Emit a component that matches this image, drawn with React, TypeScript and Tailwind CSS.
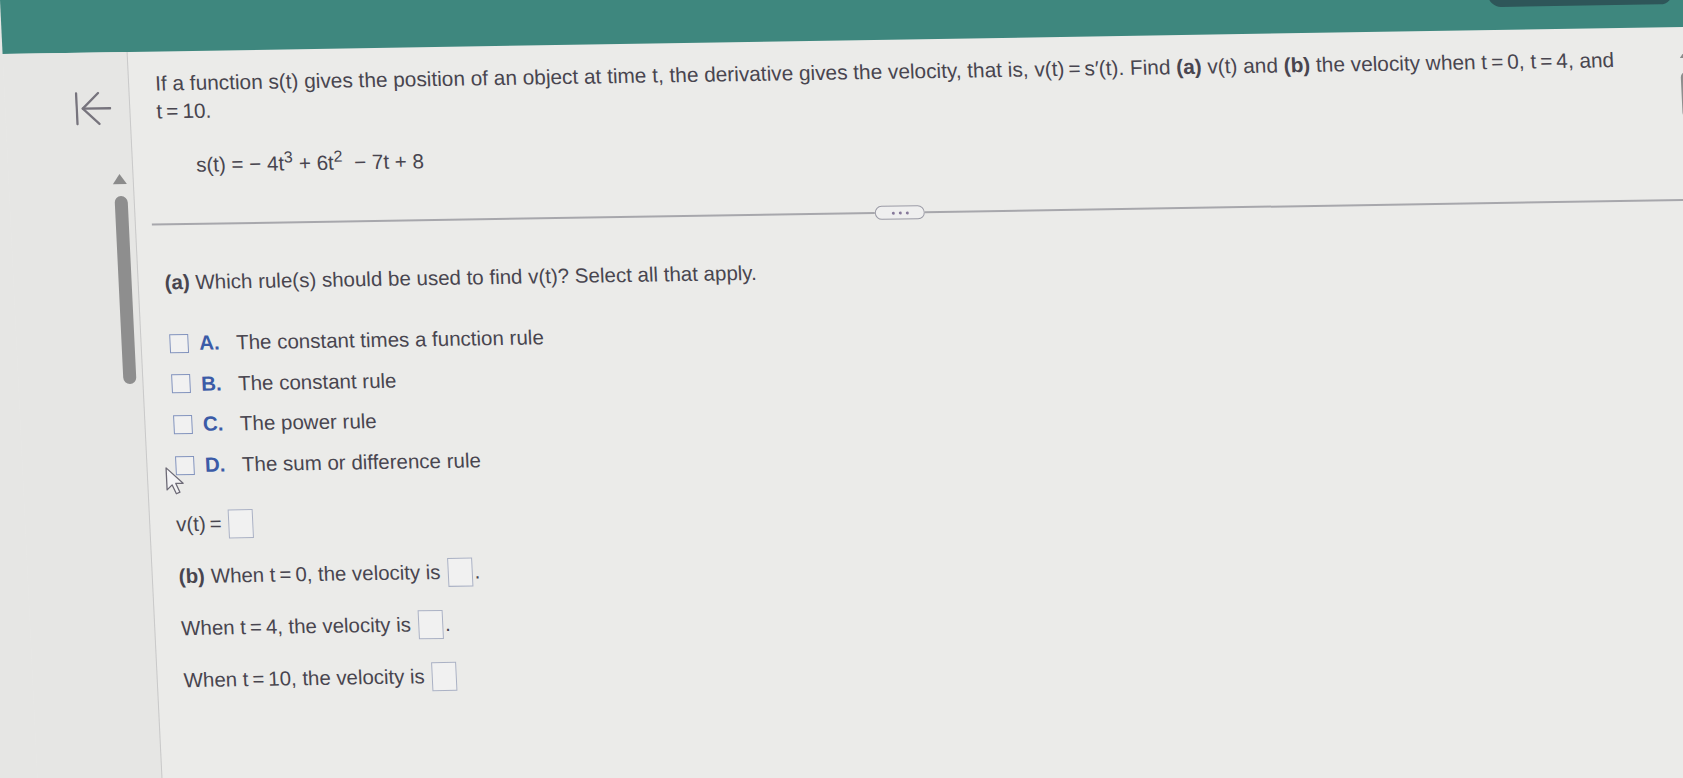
import React from 'react';

// "=" with the tight spacing the math renderer uses
const Eq: React.FC = () => <span className="mx-[4px]">=</span>;

const BackIcon: React.FC = () => (
  <svg width="36" height="34" viewBox="0 0 36 34" fill="none" stroke="#77747d" strokeWidth="2.3" strokeLinecap="round" strokeLinejoin="round">
    <path d="M1.5 1.5v31" />
    <path d="M23.5 1.5L7.5 17l16 15.5" />
    <path d="M7.5 17H35" />
  </svg>
);

const Cursor: React.FC = () => (
  <svg width="22" height="30" viewBox="0 0 22 30" className="absolute left-[-9px] top-[21px]">
    <path
      d="M1.5 1.5L1.5 23.5L6.8 18.6L10.6 27.5L14.2 26L10.5 17.2L17.8 17.2Z"
      fill="#f4f4f6"
      stroke="#6d6a76"
      strokeWidth="1.3"
      strokeLinejoin="round"
    />
  </svg>
);

const AnswerBox: React.FC<{ className?: string }> = ({ className = '' }) => (
  <span className={`inline-block w-[25px] h-[29px] border-[1.5px] border-[#aab1c4] bg-[#f1f1f1] ${className}`} />
);

const options = [
  { key: 'A.', text: 'The constant times a function rule' },
  { key: 'B.', text: 'The constant rule' },
  { key: 'C.', text: 'The power rule' },
  { key: 'D.', text: 'The sum or difference rule' },
];

export default function App() {
  return (
    <div className="h-screen w-screen overflow-hidden bg-[#e6e6e4] font-['Liberation_Sans',Arial,sans-serif] text-[20.4px] text-[#48454f]">
      <div className="w-[1700px] h-[830px] origin-top-left rotate-[-0.92deg] skew-x-[1.83deg] flex flex-col bg-[#ebebe9]">
        <header className="h-[54px] shrink-0 bg-[#3e877e] flex items-start">
          <div className="ml-auto mr-[28px] mt-[3px] w-[185px] h-[28px] rounded-[13px] bg-[#2e5659]" />
        </header>

        <div className="flex flex-1">
          <aside className="w-[125px] shrink-0 border-r border-[#c9c9c9] bg-[#e6e6e4] flex flex-col">
            <div className="ml-[70px] mt-[39px]">
              <BackIcon />
            </div>
            <div className="ml-[104px] mt-[49px] w-[14px] flex flex-col items-center">
              <div className="w-0 h-0 border-x-[7px] border-x-transparent border-b-[10px] border-b-[#8b8b8b]" />
              <div className="mt-[12px] w-[13px] h-[188px] rounded-full bg-[#8e8e8e]" />
            </div>
          </aside>

          <main className="flex-1 flex flex-col">
            {/* question stem pane */}
            <div className="h-[165px] shrink-0 flex text-[20.8px]">
              <div className="flex-1 pl-[26px] pt-[18px]">
                <p className="leading-[28px] whitespace-nowrap">
                  If a function s(t) gives the position of an object at time t, the derivative gives the velocity, that is, v(t)
                  <Eq />s′(t). Find <b className="font-bold">(a)</b> v(t) and <b className="font-bold">(b)</b> the velocity when t<Eq />0, t
                  <Eq />4, and
                  <br />
                  t<Eq />10.
                </p>
                <p className="mt-[26px] pl-[37px] leading-[28px] whitespace-nowrap text-[20.6px]">
                  s(t) = − 4t<sup className="text-[78%]">3</sup> + 6t<sup className="text-[78%]">2</sup>&nbsp; − 7t + 8
                </p>
              </div>
              <div className="w-[14px] mr-[12px] flex flex-col items-center">
                <div className="mt-[24px] w-0 h-0 border-x-[5px] border-x-transparent border-b-[7px] border-b-[#8b8b8b]" />
                <div className="mt-[14px] w-[11px] h-[46px] rounded-full bg-[#8e8e8e]" />
                <div className="mt-[14px] w-0 h-0 border-x-[5px] border-x-transparent border-t-[7px] border-t-[#8b8b8b]" />
              </div>
            </div>

            {/* divider with expand handle */}
            <div className="h-[16px] shrink-0 flex items-center pl-[16px]">
              <div className="w-[723px] h-[1.5px] bg-[#a7a7ac]" />
              <div className="w-[50px] h-[14px] rounded-full border-[1.5px] border-[#9b9ba6] bg-[#efefef] flex items-center justify-center gap-[4px]">
                <span className="w-[3px] h-[3px] rounded-full bg-[#86799a]" />
                <span className="w-[3px] h-[3px] rounded-full bg-[#86799a]" />
                <span className="w-[3px] h-[3px] rounded-full bg-[#86799a]" />
              </div>
              <div className="flex-1 h-[1.5px] bg-[#a7a7ac]" />
            </div>

            {/* answer pane */}
            <div className="pl-[26px]">
              <p className="mt-[36px] leading-[28px] whitespace-nowrap text-[20.5px]">
                <b className="font-bold">(a)</b> Which rule(s) should be used to find v(t)? Select all that apply.
              </p>

              <div className="mt-[27px] flex flex-col text-[20.5px]">
                {options.map((o, i) => (
                  <div key={o.key} className="relative h-[40.6px] flex items-center leading-[28px]">
                    {i === 3 && <Cursor />}
                    <span className="ml-[1.5px] w-[19px] h-[19px] border-[1.5px] border-[#8293bd] bg-[#f1f1f1]" />
                    <span className="ml-[11px] w-[37px] font-bold text-[#3b5ba7]">{o.key}</span>
                    <span className="whitespace-nowrap">{o.text}</span>
                  </div>
                ))}
              </div>

              <div className="mt-[24px] h-[30px] flex items-center leading-[28px] whitespace-nowrap">
                v(t)<Eq />
                <AnswerBox className="ml-[3px]" />
              </div>

              <div className="mt-[22px] h-[30px] flex items-center leading-[28px] whitespace-nowrap">
                <b className="font-bold mr-[6px]">(b)</b>When t<Eq />0, the velocity is
                <AnswerBox className="ml-[7px]" />
                <span className="ml-[2px]">.</span>
              </div>

              <div className="mt-[22px] h-[30px] flex items-center leading-[28px] whitespace-nowrap">
                When t<Eq />4, the velocity is
                <AnswerBox className="ml-[7px]" />
                <span className="ml-[2px]">.</span>
              </div>

              <div className="mt-[22px] h-[30px] flex items-center leading-[28px] whitespace-nowrap">
                When t<Eq />10, the velocity is
                <AnswerBox className="ml-[7px]" />
              </div>
            </div>
          </main>
        </div>
      </div>
    </div>
  );
}
